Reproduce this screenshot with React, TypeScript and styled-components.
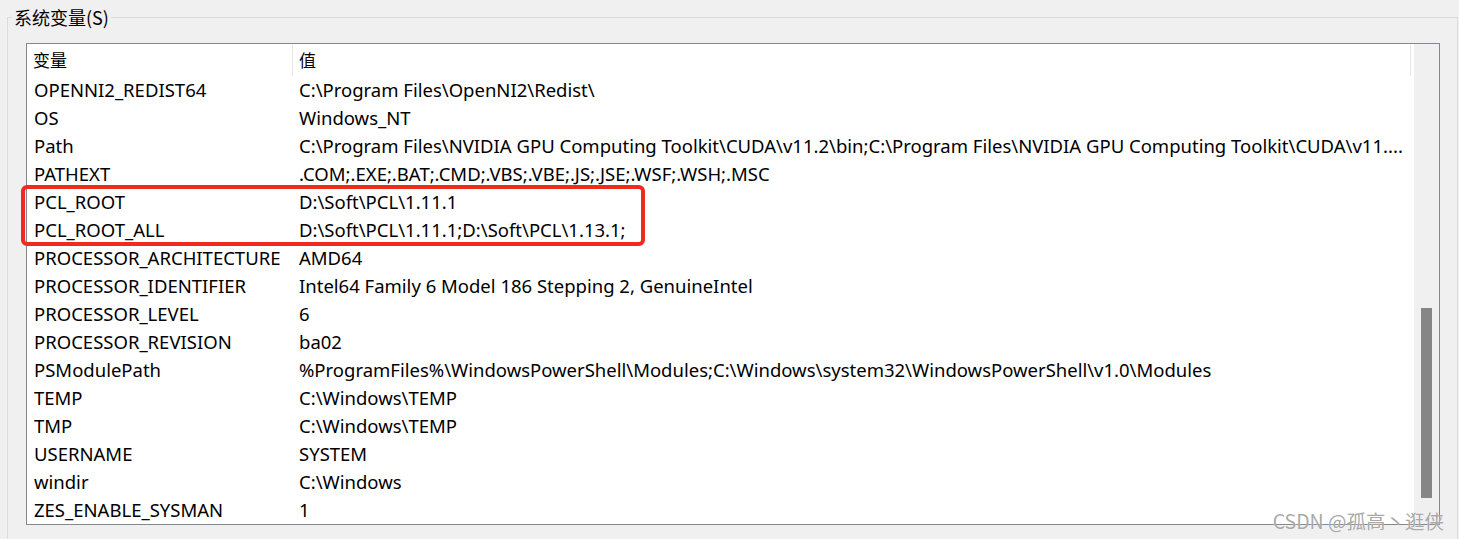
import styled, { createGlobalStyle } from "styled-components";

const GlobalStyle = createGlobalStyle`
  html, body {
    margin: 0;
    padding: 0;
    background: #f0f0f0;
  }
  body {
    font-family: "Noto Sans", "Noto Sans CJK SC", sans-serif;
  }
`;

const Page = styled.div`
  position: relative;
  width: 1459px;
  height: 539px;
  overflow: hidden;
  background: #f0f0f0;
`;

const Group = styled.fieldset`
  box-sizing: border-box;
  margin: 5px 1px 0 7px;
  padding: 14px 17px 0 18px;
  height: 560px;
  border: 1px solid #dcdcdc;
  border-radius: 0;
`;

const Legend = styled.legend`
  margin-left: -14px;
  padding: 0 2px;
  font-family: "Noto Sans CJK SC", "Noto Sans", sans-serif;
  font-size: 18px;
  line-height: 24px;
  color: #000;
`;

const ListBox = styled.div`
  box-sizing: border-box;
  display: flex;
  width: 1414px;
  height: 482px;
  border: 1px solid #828790;
  background: #fff;
`;

const Content = styled.div`
  flex: 1;
  min-width: 0;
  display: flex;
  flex-direction: column;
`;

const HeaderRow = styled.div`
  display: grid;
  grid-template-columns: 266px 1118px;
  height: 32px;
  padding-top: 1px;
  box-sizing: border-box;
`;

const HeaderCell = styled.div<{ $pad: number }>`
  box-sizing: border-box;
  padding-left: ${(p) => p.$pad}px;
  border-right: 1px solid #e5e5e5;
  font-family: "Noto Sans CJK SC", "Noto Sans", sans-serif;
  font-size: 17px;
  line-height: 30px;
  color: #000;
`;

const Row = styled.div`
  display: grid;
  grid-template-columns: 266px 1118px;
  height: 28px;
`;

const Cell = styled.div<{ $pad: number }>`
  box-sizing: border-box;
  padding-left: ${(p) => p.$pad}px;
  padding-right: 3px;
  font-size: 18.5px;
  line-height: 28px;
  color: #000;
  white-space: nowrap;
  overflow: hidden;
`;

const Scrollbar = styled.div`
  position: relative;
  width: 25px;
  flex: none;
  background: #f0f0f0;
`;

const Thumb = styled.div`
  position: absolute;
  left: 7px;
  top: 264px;
  width: 11px;
  height: 190px;
  background: #868686;
`;

const Highlight = styled.div`
  position: absolute;
  left: 21px;
  top: 185px;
  width: 624px;
  height: 61px;
  box-sizing: border-box;
  border: 4px solid #f02a1f;
  border-radius: 6px;
`;

const Watermark = styled.div`
  position: absolute;
  right: 15px;
  bottom: 5px;
  font-family: "Noto Sans CJK SC", "Noto Sans", sans-serif;
  font-size: 19.5px;
  line-height: 26px;
  color: rgba(130, 130, 130, 0.7);
  text-shadow: 0 0 1px #fff;
`;

const vars: [string, string][] = [
  ["OPENNI2_REDIST64", "C:\\Program Files\\OpenNI2\\Redist\\"],
  ["OS", "Windows_NT"],
  [
    "Path",
    "C:\\Program Files\\NVIDIA GPU Computing Toolkit\\CUDA\\v11.2\\bin;C:\\Program Files\\NVIDIA GPU Computing Toolkit\\CUDA\\v11....",
  ],
  ["PATHEXT", ".COM;.EXE;.BAT;.CMD;.VBS;.VBE;.JS;.JSE;.WSF;.WSH;.MSC"],
  ["PCL_ROOT", "D:\\Soft\\PCL\\1.11.1"],
  ["PCL_ROOT_ALL", "D:\\Soft\\PCL\\1.11.1;D:\\Soft\\PCL\\1.13.1;"],
  ["PROCESSOR_ARCHITECTURE", "AMD64"],
  ["PROCESSOR_IDENTIFIER", "Intel64 Family 6 Model 186 Stepping 2, GenuineIntel"],
  ["PROCESSOR_LEVEL", "6"],
  ["PROCESSOR_REVISION", "ba02"],
  [
    "PSModulePath",
    "%ProgramFiles%\\WindowsPowerShell\\Modules;C:\\Windows\\system32\\WindowsPowerShell\\v1.0\\Modules",
  ],
  ["TEMP", "C:\\Windows\\TEMP"],
  ["TMP", "C:\\Windows\\TEMP"],
  ["USERNAME", "SYSTEM"],
  ["windir", "C:\\Windows"],
  ["ZES_ENABLE_SYSMAN", "1"],
];

const App = () => {
  return (
    <>
      <GlobalStyle />
      <Page>
        <Group>
          <Legend>系统变量(S)</Legend>
          <ListBox>
            <Content>
              <HeaderRow>
                <HeaderCell $pad={6}>变量</HeaderCell>
                <HeaderCell $pad={6}>值</HeaderCell>
              </HeaderRow>
              {vars.map(([name, value]) => (
                <Row key={name}>
                  <Cell $pad={7}>{name}</Cell>
                  <Cell $pad={6}>{value}</Cell>
                </Row>
              ))}
            </Content>
            <Scrollbar>
              <Thumb />
            </Scrollbar>
          </ListBox>
        </Group>
        <Highlight />
        <Watermark>CSDN @孤高丶逛侠</Watermark>
      </Page>
    </>
  );
};

export default App;
